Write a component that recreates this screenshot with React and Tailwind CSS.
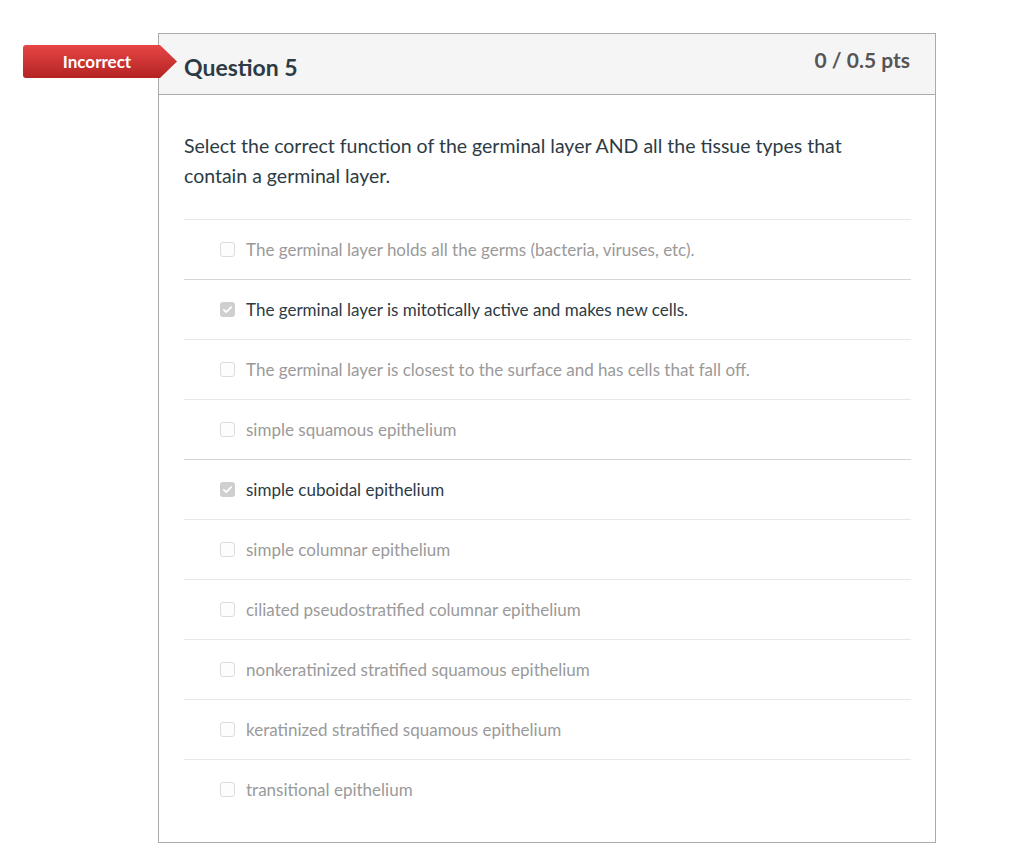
const answers = [
  { text: "The germinal layer holds all the germs (bacteria, viruses, etc).", checked: false },
  { text: "The germinal layer is mitotically active and makes new cells.", checked: true },
  { text: "The germinal layer is closest to the surface and has cells that fall off.", checked: false },
  { text: "simple squamous epithelium", checked: false },
  { text: "simple cuboidal epithelium", checked: true },
  { text: "simple columnar epithelium", checked: false },
  { text: "ciliated pseudostratified columnar epithelium", checked: false },
  { text: "nonkeratinized stratified squamous epithelium", checked: false },
  { text: "keratinized stratified squamous epithelium", checked: false },
  { text: "transitional epithelium", checked: false },
];

const Checkbox = ({ checked }) => {
  if (checked) {
    return (
      <span className="flex h-[15px] w-[15px] shrink-0 items-center justify-center rounded-[3px] bg-[#cfcfcf]">
        <svg width="11" height="11" viewBox="0 0 12 12" fill="none">
          <path d="M2 6.3l2.6 2.6L10 3.4" stroke="#fff" strokeWidth="2" strokeLinecap="round" strokeLinejoin="round" />
        </svg>
      </span>
    );
  }
  return <span className="h-[15px] w-[15px] shrink-0 rounded-[3px] border border-[#dcdcdc] bg-[#fdfdfd]" />;
};

const App = () => {
  return (
    <div className="relative min-h-[853px] bg-white font-['Lato','Open_Sans',sans-serif] text-[#2d3b45]">
      <div className="pl-[158px] pt-[33px]">
        <div className="relative w-[778px] border border-[#aaaaaa]">
          {/* Incorrect badge */}
          <div className="absolute left-[-136px] top-[11px] flex h-[33px] w-[154px] items-center rounded-l-[3px] bg-gradient-to-b from-[#e64545] to-[#b42323] pl-[4px] pr-[10px] [clip-path:polygon(0_0,calc(100%-17px)_0,100%_50%,calc(100%-17px)_100%,0_100%)]">
            <span className="w-full text-center text-[17px] font-bold text-white">Incorrect</span>
          </div>

          {/* Header */}
          <div className="flex h-[61px] justify-between border-b border-[#aaaaaa] bg-[#f5f5f5] pl-[25px] pr-[25px]">
            <h2 className="pt-[18px] text-[23px] font-bold leading-[30px] text-[#2d3b45]">Question 5</h2>
            <div className="pt-[13px] text-[21px] font-bold leading-[26px] text-[#555]">0 / 0.5 pts</div>
          </div>

          {/* Body */}
          <div className="pl-[25px] pr-[24px] pb-[23px] pt-[36px]">
            <p className="text-[19.5px] leading-[30px] text-[#2d3b45]">
              Select the correct function of the germinal layer AND all the tissue types that
              <br />
              contain a germinal layer.
            </p>
            <div className="mt-[28px]">
              {answers.map((a, i) => (
                <div
                  key={i}
                  className={`flex h-[60px] items-center gap-[11px] border-t pl-[36px] ${
                    a.checked ? "border-[#d6d6d6]" : "border-[#e8e8e8]"
                  }`}
                >
                  <Checkbox checked={a.checked} />
                  <span className={`text-[17px] ${a.checked ? "text-[#2d3b45]" : "text-[#9a9a9a]"}`}>{a.text}</span>
                </div>
              ))}
            </div>
          </div>
        </div>
      </div>
    </div>
  );
};

export default App;
